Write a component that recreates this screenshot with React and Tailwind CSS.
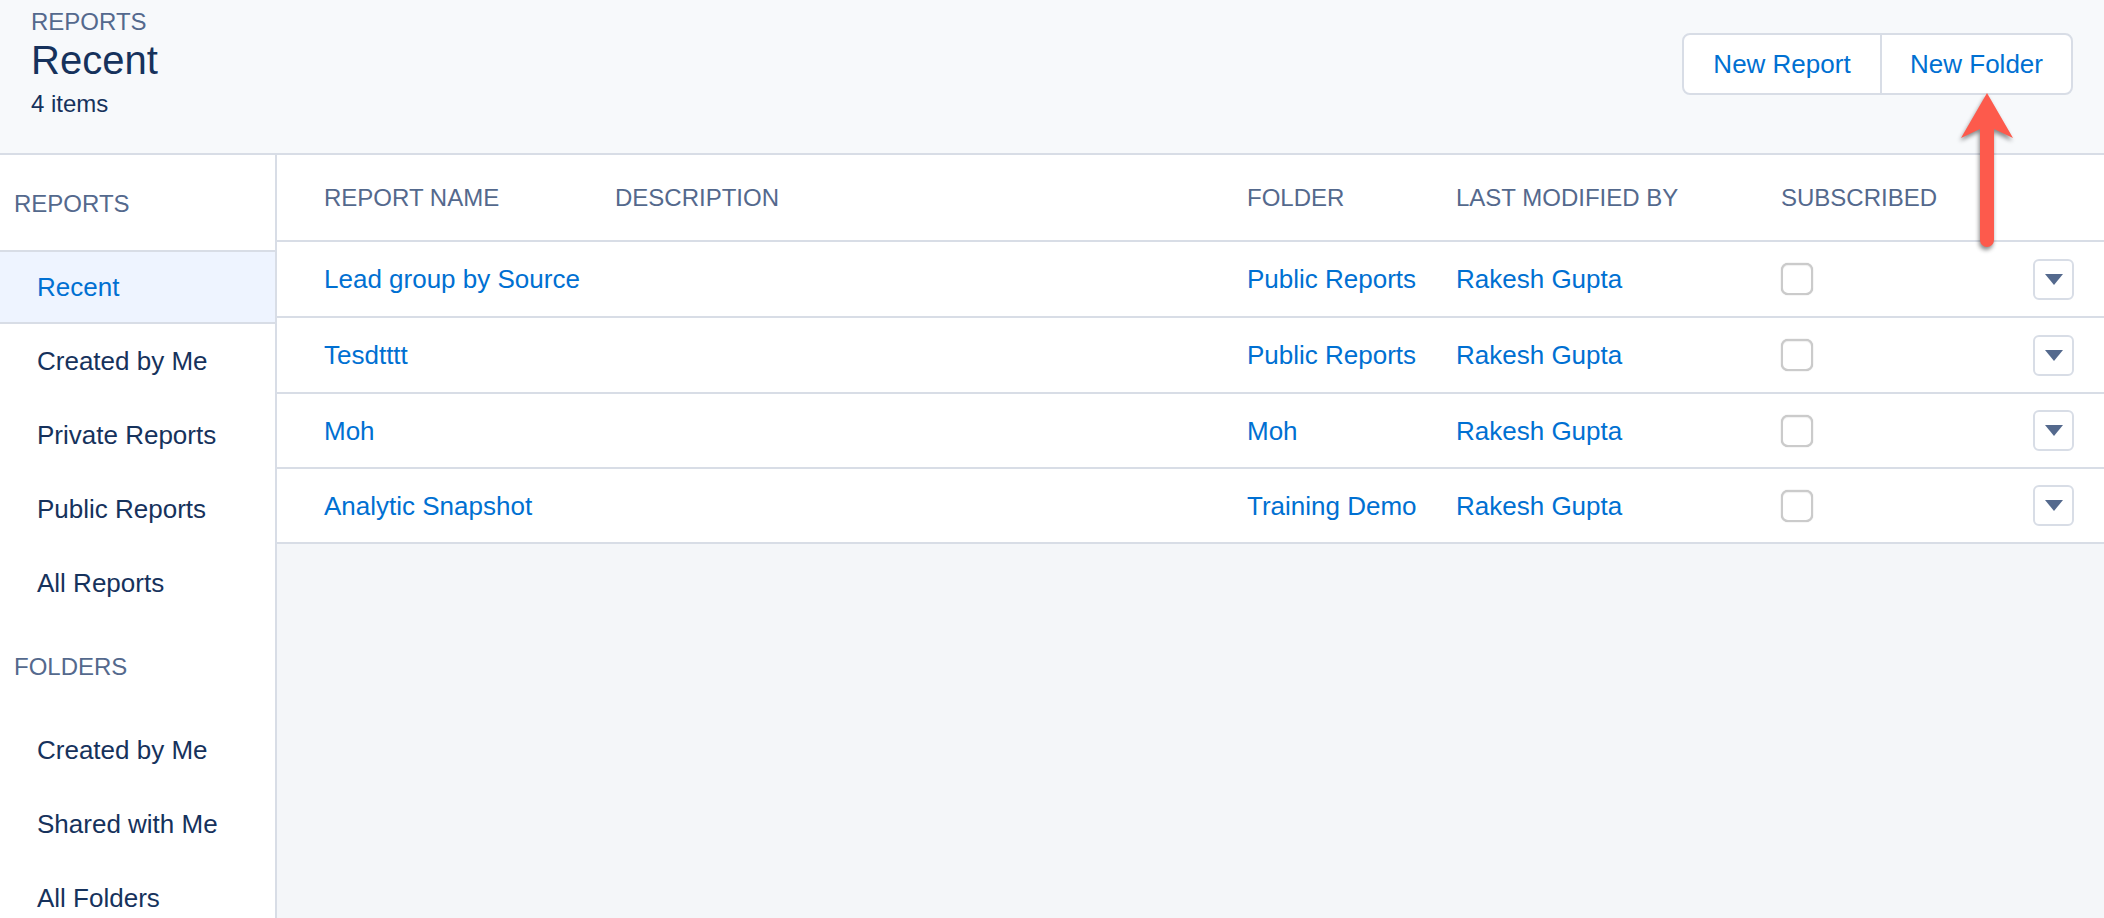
import React from "react";

const rows = [
  { name: "Lead group by Source", folder: "Public Reports", h: "h-[76px]" },
  { name: "Tesdtttt", folder: "Public Reports", h: "h-[76px]" },
  { name: "Moh", folder: "Moh", h: "h-[75px]" },
  { name: "Analytic Snapshot", folder: "Training Demo", h: "h-[75px]" },
];

const reportItems = ["Recent", "Created by Me", "Private Reports", "Public Reports", "All Reports"];
const folderItems = ["Created by Me", "Shared with Me", "All Folders"];

function Checkbox() {
  return (
    <div className="w-[32px] h-[32px] rounded-[7px] border-2 border-[#cbcbcb] bg-white shadow-[0_0_1px_rgba(0,0,0,0.35),inset_0_1px_1px_rgba(0,0,0,0.06)]" />
  );
}

function MenuButton() {
  return (
    <div className="w-[41px] h-[41px] rounded-[6px] border-2 border-[#d8dde6] bg-white flex items-center justify-center">
      <svg width="18" height="11" viewBox="0 0 18 11">
        <path d="M0 0 L18 0 L9 11 Z" fill="#54698d" />
      </svg>
    </div>
  );
}

function Arrow() {
  return (
    <svg
      className="absolute left-[1950px] top-[88px] drop-shadow-[-1px_3px_2px_rgba(0,0,0,0.45)]"
      width="80"
      height="172"
      viewBox="0 0 80 172"
    >
      <path
        d="M37 5 L63 50 L44 41 L44 152 A7 7 0 0 1 30 152 L30 41 L11 50 Z"
        fill="#fd5a4c"
      />
    </svg>
  );
}

export default function App() {
  return (
    <div className="relative w-[2104px] h-[918px] overflow-hidden bg-white font-['Liberation_Sans',Arial,sans-serif]">
      {/* Page header */}
      <header className="h-[155px] bg-[#f7f9fb] border-b-2 border-[#d8dde6] flex justify-between">
        <div className="pl-[31px] pt-[10px] flex flex-col">
          <div className="text-[24px] leading-[24px] text-[#54698d]">REPORTS</div>
          <div className="mt-[6px] text-[40px] leading-[40px] text-[#16325c]">Recent</div>
          <div className="mt-[12px] text-[24px] leading-[24px] text-[#16325c]">4 items</div>
        </div>
        <div className="pr-[31px] pt-[33px]">
          <div className="flex h-[62px] rounded-[8px] border-2 border-[#d8dde6] bg-white overflow-hidden">
            <button className="w-[196px] h-full flex items-center justify-center text-[26px] text-[#0070d2]">
              New Report
            </button>
            <button className="w-[191px] h-full flex items-center justify-center border-l-2 border-[#d8dde6] text-[26px] text-[#0070d2]">
              New Folder
            </button>
          </div>
        </div>
      </header>

      <div className="flex h-[763px]">
        {/* Sidebar */}
        <nav className="w-[277px] shrink-0 h-full overflow-hidden bg-white border-r-2 border-[#d8dde6] flex flex-col">
          <div className="h-[95px] shrink-0 pt-[37px] pl-[14px] text-[24px] leading-[24px] text-[#54698d]">REPORTS</div>
          {reportItems.map((item, i) =>
            i === 0 ? (
              <div
                key={item}
                className="h-[74px] shrink-0 flex items-center pl-[37px] bg-[#eef4ff] border-y-2 border-[#d8dde6] text-[26px] leading-[26px] text-[#0070d2]"
              >
                {item}
              </div>
            ) : (
              <div
                key={item}
                className="h-[74px] shrink-0 flex items-center pl-[37px] text-[26px] leading-[26px] text-[#16325c]"
              >
                {item}
              </div>
            )
          )}
          <div className="h-[93px] shrink-0 pt-[35px] pl-[14px] text-[24px] leading-[24px] text-[#54698d]">FOLDERS</div>
          {folderItems.map((item) => (
            <div
              key={item}
              className="h-[74px] shrink-0 flex items-center pl-[37px] text-[26px] leading-[26px] text-[#16325c]"
            >
              {item}
            </div>
          ))}
        </nav>

        {/* Main */}
        <main className="flex-1 h-full bg-[#f4f6f9] flex flex-col">
          <div className="bg-white">
            <div className="h-[87px] flex items-center border-b-2 border-[#d8dde6] text-[24px] leading-[24px] text-[#54698d]">
              <div className="w-[338px] pl-[47px]">REPORT NAME</div>
              <div className="w-[632px]">DESCRIPTION</div>
              <div className="w-[209px]">FOLDER</div>
              <div className="w-[325px]">LAST MODIFIED BY</div>
              <div className="w-[252px]">SUBSCRIBED</div>
              <div className="w-[41px]" />
            </div>
            {rows.map((r) => (
              <div
                key={r.name}
                className={`${r.h} flex items-center border-b-2 border-[#d8dde6] text-[26px] leading-[26px] text-[#0070d2]`}
              >
                <div className="w-[338px] pl-[47px]">{r.name}</div>
                <div className="w-[632px]" />
                <div className="w-[209px] whitespace-nowrap">{r.folder}</div>
                <div className="w-[325px]">Rakesh Gupta</div>
                <div className="w-[252px]">
                  <Checkbox />
                </div>
                <div className="w-[41px]">
                  <MenuButton />
                </div>
              </div>
            ))}
          </div>
        </main>
      </div>

      <Arrow />
    </div>
  );
}
